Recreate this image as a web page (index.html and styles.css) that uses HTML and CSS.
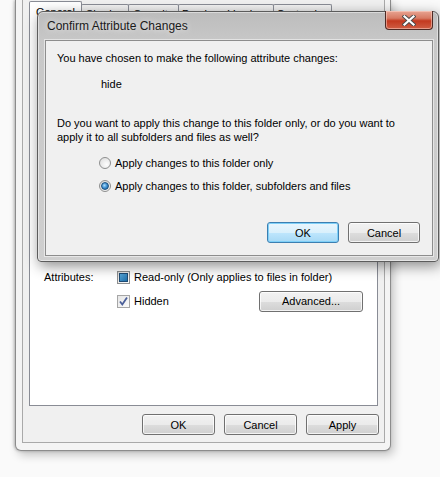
FILE: index.html
```html
<!DOCTYPE html>
<html>
<head>
<meta charset="utf-8">
<link rel="stylesheet" href="styles.css">
</head>
<body>
<div class="window">
  <div class="client">
    <div class="tabs">
      <div class="tab active">General</div>
      <div class="tab">Sharing</div>
      <div class="tab">Security</div>
      <div class="tab">Previous Versions</div>
      <div class="tab">Customize</div>
    </div>
    <div class="panel">
      <div class="attrs">
        <div class="attr-label">Attributes:</div>
        <div class="attr-list">
          <div class="check-row">
            <span class="checkbox indeterminate"><span class="fill"></span></span>
            <span>Read-only (Only applies to files in folder)</span>
          </div>
          <div class="check-row">
            <span class="checkbox checked">
              <svg width="11" height="11" viewBox="0 0 11 11"><path d="M2 5.5 L4.3 8.5 L9 1.5" fill="none" stroke="#4b5f99" stroke-width="1.8"/></svg>
            </span>
            <span>Hidden</span>
            <span class="spacer"></span>
            <button class="btn adv">Advanced...</button>
          </div>
        </div>
      </div>
    </div>
    <div class="btn-row">
      <button class="btn">OK</button>
      <button class="btn">Cancel</button>
      <button class="btn">Apply</button>
    </div>
  </div>
</div>

<div class="dialog">
  <div class="titlebar">
    <span class="title">Confirm Attribute Changes</span>
    <div class="close">
      <svg width="14" height="11" viewBox="0 0 14 11"><path d="M2.5 1.5 L11.5 9.5 M11.5 1.5 L2.5 9.5" stroke="#4a4a4a" stroke-width="4" stroke-linecap="square"/><path d="M2.5 1.5 L11.5 9.5 M11.5 1.5 L2.5 9.5" stroke="#ffffff" stroke-width="2.2" stroke-linecap="square"/></svg>
    </div>
  </div>
  <div class="dlg-body">
    <p class="msg">You have chosen to make the following attribute changes:</p>
    <p class="change">hide</p>
    <p class="question">Do you want to apply this change to this folder only, or do you want to apply it to all subfolders and files as well?</p>
    <div class="radio-row first"><span class="radio"></span><span>Apply changes to this folder only</span></div>
    <div class="radio-row"><span class="radio on"><span class="dot"></span></span><span>Apply changes to this folder, subfolders and files</span></div>
    <div class="dlg-buttons">
      <button class="btn default">OK</button>
      <button class="btn">Cancel</button>
    </div>
  </div>
</div>
</body>
</html>
```

FILE: styles.css
```css
html, body {
  margin: 0;
  padding: 0;
}
body {
  width: 440px;
  height: 477px;
  overflow: hidden;
  position: relative;
  background: #fafafa;
  font-family: "Liberation Sans", Arial, sans-serif;
  font-size: 11px;
  color: #000;
}

/* ---------- background properties window ---------- */
.window {
  margin-left: 15px;
  width: 376px;
  height: 451px;
  box-sizing: border-box;
  border: 1px solid #8c8c8c;
  border-top: none;
  border-radius: 0 0 6px 6px;
  background: #f4f4f4;
  padding: 0 5px 7px 6px;
  box-shadow: 3px 4px 10px rgba(0,0,0,0.22), -1px 0 3px rgba(0,0,0,0.25);
}
.client {
  height: 100%;
  box-sizing: border-box;
  border: 1px solid #a9a9a9;
  border-top: none;
  background: #f0f0f0;
  padding: 2px 6px 0 6px;
  display: flex;
  flex-direction: column;
}
.tabs {
  display: flex;
  height: 19px;
  align-items: flex-end;
  position: relative;
  z-index: 1;
}
.tab {
  height: 17px;
  box-sizing: border-box;
  border: 1px solid #898c95;
  border-bottom: none;
  border-radius: 2px 2px 0 0;
  background: linear-gradient(#f2f2f2, #e3e3e3);
  padding: 3px 0 0 0;
  margin-left: -1px;
  white-space: nowrap;
  overflow: hidden;
  text-align: center;
}
.tab:nth-child(2) { width: 48px; }
.tab:nth-child(3) { width: 51px; }
.tab:nth-child(4) { width: 96px; }
.tab:nth-child(5) { width: 59px; }
.tab.active {
  height: 21px;
  width: 53px;
  margin-left: 0;
  margin-bottom: -1px;
  background: #fff;
  padding-top: 4px;
}
.panel {
  height: 385px;
  box-sizing: border-box;
  border: 1px solid #898c95;
  background: #fff;
  padding: 247px 14px 0 14px;
}
.attrs {
  display: flex;
}
.attr-label {
  width: 73px;
  line-height: 16px;
}
.attr-list {
  flex: 1;
  display: flex;
  flex-direction: column;
  gap: 8px;
}
.check-row {
  display: flex;
  align-items: center;
  height: 16px;
  gap: 4px;
}
.spacer { flex: 1; }
.checkbox {
  width: 13px;
  height: 13px;
  box-sizing: border-box;
  border: 1px solid #8e8f8f;
  background: linear-gradient(135deg, #dcdcdc, #fbfbfb);
  display: flex;
  align-items: center;
  justify-content: center;
}
.checkbox .fill {
  width: 9px;
  height: 9px;
  box-sizing: border-box;
  border: 1px solid #1d4a73;
  background: linear-gradient(135deg, #56a6d8, #1f6ea8);
}
.checkbox.checked {
  border-color: #a6a6a6;
  background: linear-gradient(135deg, #e6e6e6, #fafafa);
}
.btn {
  font-family: inherit;
  font-size: 11px;
  color: #000;
  height: 21px;
  box-sizing: border-box;
  border: 1px solid #707070;
  border-radius: 3px;
  background: linear-gradient(#f2f2f2 0%, #ebebeb 50%, #dddddd 51%, #cfcfcf 100%);
  box-shadow: inset 0 0 0 1px rgba(255,255,255,0.75);
  padding: 0;
  margin: 0;
}
.btn.adv {
  width: 104px;
  flex-shrink: 0;
}
.btn-row {
  display: flex;
  justify-content: flex-end;
  gap: 9px;
  padding-top: 8px;
  margin-right: -1px;
}
.btn-row .btn {
  width: 73px;
}

/* ---------- confirm dialog ---------- */
.dialog {
  position: absolute;
  left: 37px;
  top: 11px;
  width: 402px;
  height: 251px;
  box-sizing: border-box;
  border: 1px solid #5c5c5c;
  border-radius: 6px 6px 4px 4px;
  background: linear-gradient(#bcbcbc 0px, #c8c8c8 30px, #cfcfcf 100%);
  box-shadow: 2px 4px 14px rgba(0,0,0,0.45), inset 0 0 0 1px rgba(255,255,255,0.45);
  display: flex;
  flex-direction: column;
  padding: 0 5px 5px 7px;
  z-index: 5;
}
.titlebar {
  height: 28px;
  display: flex;
  align-items: flex-start;
  position: relative;
}
.title {
  font-size: 12px;
  margin-left: 2px;
  margin-top: 7px;
  color: #1a1a1a;
  text-shadow: 0 0 6px rgba(255,255,255,0.9);
}
.close {
  position: absolute;
  right: 0;
  top: -1px;
  width: 48px;
  height: 19px;
  box-sizing: border-box;
  border: 1px solid #4e2a24;
  border-top: none;
  border-radius: 0 0 4px 4px;
  background: linear-gradient(#e8a492 0%, #d77a63 40%, #c3391f 55%, #cf5e44 100%);
  box-shadow: inset 0 0 0 1px rgba(255,220,210,0.5);
  display: flex;
  align-items: center;
  justify-content: center;
}
.dlg-body {
  flex: 1;
  background: #f0f0f0;
  border: 1px solid #8d8d8d;
  box-shadow: 0 0 0 1px rgba(255,255,255,0.5);
  padding: 0 12px 0 11px;
  display: flex;
  flex-direction: column;
}
.dlg-body p {
  margin: 0;
}
.msg {
  line-height: 15px;
  margin-top: 10px !important;
}
.change {
  line-height: 15px;
  margin-top: 11px !important;
  margin-left: 44px !important;
}
.question {
  line-height: 14px;
  margin-top: 24px !important;
  padding-right: 8px;
}
.radio-row {
  display: flex;
  align-items: center;
  height: 16px;
  gap: 4px;
  margin-left: 42px;
  margin-top: 7px;
}
.radio-row.first {
  margin-top: 11px;
}
.radio {
  width: 12px;
  height: 12px;
  box-sizing: border-box;
  border-radius: 50%;
  border: 1px solid #8e8f8f;
  background: radial-gradient(circle at 65% 65%, #fdfdfd 0%, #e4e4e4 70%, #d6d6d6 100%);
  display: flex;
  align-items: center;
  justify-content: center;
}
.radio .dot {
  width: 6px;
  height: 6px;
  border-radius: 50%;
  border: 0.5px solid #1b4f7c;
  background: radial-gradient(circle at 40% 40%, #a9dcfb 0%, #3a8dd0 50%, #1b5b92 100%);
}
.dlg-buttons {
  display: flex;
  justify-content: flex-end;
  gap: 9px;
  margin-top: 28px;
}
.dlg-buttons .btn {
  width: 72px;
}
.btn.default {
  border-color: #3c7fb1;
  background: linear-gradient(#eaf6fd 0%, #d9f0fc 50%, #bee6fd 51%, #a7d9f5 100%);
  box-shadow: inset 0 0 0 1px #7fd0f8;
}
```
